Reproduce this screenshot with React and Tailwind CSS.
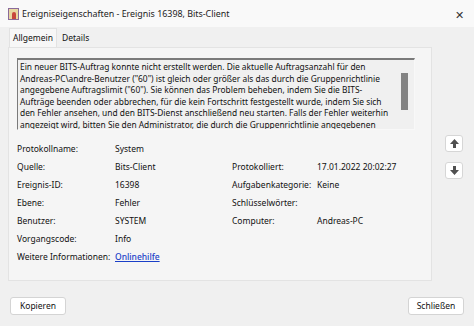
import React from 'react';

const font = { fontFamily: '"Noto Sans", "Open Sans", sans-serif' };

const Field = ({ label, value, children }) => (
  <div className="flex h-[18px] items-center">
    <div className="w-[98px] shrink-0 whitespace-nowrap">{label}</div>
    <div className="whitespace-nowrap">{children || value}</div>
  </div>
);

const RightField = ({ label, value }) => (
  <div className="flex h-[18px] items-center">
    <div className="w-[85px] shrink-0 whitespace-nowrap">{label}</div>
    <div className="whitespace-nowrap">{value}</div>
  </div>
);

const ArrowBtn = ({ down }) => (
  <div className="w-[18px] h-[17px] bg-white border border-[#d6d6d6] rounded-[3px] flex items-center justify-center">
    <svg width="9" height="9" viewBox="0 0 9 9">
      {down ? (
        <path d="M3 0h3v4h3L4.5 9 0 4h3z" fill="#505050" />
      ) : (
        <path d="M4.5 0L9 5H6v4H3V5H0z" fill="#505050" />
      )}
    </svg>
  </div>
);

export default function App() {
  return (
    <div className="w-[474px] h-[326px] bg-[#f0f0f0] text-[#111] text-[8.5px] flex flex-col overflow-hidden" style={font}>
      {/* title bar */}
      <div className="h-[27px] bg-[#f9f9f9] flex items-center pl-[8px] pr-[10px] shrink-0">
        <div className="w-[11px] h-[12px] border border-[#8a6a9a] bg-[#e8d7a0] flex items-end justify-center">
          <div className="w-[4px] h-[7px] bg-[#c8463c] rounded-t-[2px]" />
        </div>
        <div className="ml-[3px] text-[8.9px] text-[#222]">Ereigniseigenschaften - Ereignis 16398, Bits-Client</div>
        <div className="ml-auto text-[11px] leading-none text-[#333] pt-[2px]">✕</div>
      </div>

      {/* tabs */}
      <div className="flex items-end pl-[9px] h-[19px] shrink-0 mt-[1px]">
        <div className="h-[19px] px-[3px] bg-[#f7f7f7] border-t border-l border-r border-[#e2e2e2] flex items-center">Allgemein</div>
        <div className="h-[17px] px-[5px] flex items-center">Details</div>
      </div>

      <div className="flex flex-1 pl-[8px]">
        {/* panel */}
        <div className="w-[424px] h-[234px] bg-[#f5f5f5] border border-[#e3e3e3] pt-[10px] pl-[8px] pr-[16px]">
          <div className="h-[72px] bg-[#f0f0f0] border-t-2 border-l border-[#7a7a7a] border-r border-r-[#f8f8f8] border-b border-b-[#f8f8f8] flex">
            <div className="flex-1 pl-[2px] pt-[1px] text-[8.4px] leading-[11.6px] overflow-hidden">
              Ein neuer BITS-Auftrag konnte nicht erstellt werden. Die aktuelle Auftragsanzahl für den Andreas-PC\andre-Benutzer ("60") ist gleich oder größer als das durch die Gruppenrichtlinie angegebene Auftragslimit ("60"). Sie können das Problem beheben, indem Sie die BITS-Aufträge beenden oder abbrechen, für die kein Fortschritt festgestellt wurde, indem Sie sich den Fehler ansehen, und den BITS-Dienst anschließend neu starten. Falls der Fehler weiterhin angezeigt wird, bitten Sie den Administrator, die durch die Gruppenrichtlinie angegebenen
            </div>
            <div className="w-[20px] flex justify-center pt-[13px]">
              <div className="w-[7px] h-[37px] bg-[#838383]" />
            </div>
          </div>

          <div className="flex mt-[10px]">
            <div className="w-[215px]">
              <Field label="Protokollname:" value="System" />
              <Field label="Quelle:" value="Bits-Client" />
              <Field label="Ereignis-ID:" value="16398" />
              <Field label="Ebene:" value="Fehler" />
              <Field label="Benutzer:" value="SYSTEM" />
              <Field label="Vorgangscode:" value="Info" />
              <Field label="Weitere Informationen:">
                <span className="text-[#1a3fc8] underline font-medium">Onlinehilfe</span>
              </Field>
            </div>
            <div className="pt-[18px]">
              <RightField label="Protokolliert:" value="17.01.2022 20:02:27" />
              <RightField label="Aufgabenkategorie:" value="Keine" />
              <RightField label="Schlüsselwörter:" value="" />
              <RightField label="Computer:" value="Andreas-PC" />
            </div>
          </div>
        </div>

        {/* nav arrows */}
        <div className="pl-[13px] pt-[88px] flex flex-col gap-[10px]">
          <ArrowBtn />
          <ArrowBtn down />
        </div>
      </div>

      {/* footer buttons */}
      <div className="flex justify-between px-[10px] pb-[11px] shrink-0">
        <div className="w-[56px] h-[18px] bg-white border border-[#d4d4d4] rounded-[3px] flex items-center justify-center">Kopieren</div>
        <div className="w-[56px] h-[18px] bg-white border border-[#d4d4d4] rounded-[3px] flex items-center justify-center">Schließen</div>
      </div>
    </div>
  );
}
